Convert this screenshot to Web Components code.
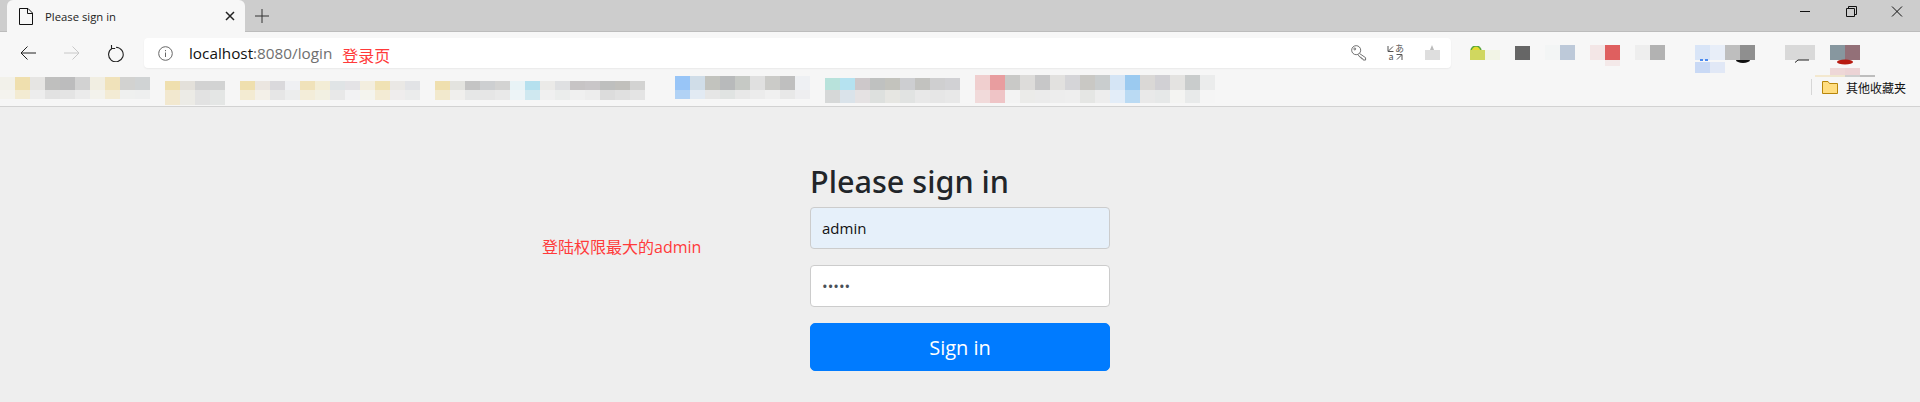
<!DOCTYPE html>
<html lang="zh">
<head>
<meta charset="utf-8">
<title>Please sign in</title>
<style>
  html, body { margin: 0; height: 100%; overflow: hidden; background: #eeeeee; }
  body { display: flex; flex-direction: column; font-family: "Open Sans", "Noto Sans CJK SC", sans-serif; }
</style>
</head>
<body>
<browser-tabs></browser-tabs>
<browser-toolbar></browser-toolbar>
<bookmark-bar></bookmark-bar>
<login-page></login-page>

<script>
// blurred (mosaic) patch: two rows of 15px cells, colours passed as attributes
class PixelStrip extends HTMLElement {
    connectedCallback() {
        const top = (this.getAttribute('top') || '').split(' ').filter(Boolean);
        const bottom = (this.getAttribute('bottom') || '').split(' ').filter(Boolean);
        const h1 = this.getAttribute('h1') || 12;
        const h2 = this.getAttribute('h2') || 10;
        const row = (list, h) => `<div class="row" style="height:${h}px">` +
            list.map(c => `<i style="background:${c}"></i>`).join('') + '</div>';
        this.attachShadow({ mode: 'open' });
        this.shadowRoot.innerHTML = `
            <style>
                :host { display: block; flex: none; }
                .row { display: flex; }
                i { display: block; width: 15px; height: 100%; flex: none; }
            </style>
            ${row(top, h1)}${row(bottom, h2)}
        `;
    }
}
customElements.define('pixel-strip', PixelStrip);

class BrowserTabs extends HTMLElement {
    constructor() {
        super();
        this.attachShadow({ mode: 'open' });
        this.shadowRoot.innerHTML = `
            <style>
                :host {
                    display: flex;
                    align-items: stretch;
                    height: 31px;
                    padding-left: 7px;
                    background: #cdcdcd;
                    border-bottom: 1px solid #bcbcbc;
                    flex: none;
                }
                .tab {
                    display: flex;
                    align-items: center;
                    width: 238px;
                    height: 32px;
                    box-sizing: border-box;
                    padding: 0 10px 0 12px;
                    background: #f7f7f7;
                    border-radius: 6px 6px 0 0;
                    font-size: 11.3px;
                    color: #222;
                }
                .title { flex: 1; margin-left: 12px; }
                svg { display: block; flex: none; }
                .plus { margin: 9px 0 0 10px; }
                .win { margin-left: auto; display: flex; align-items: flex-start; }
                .win svg { width: 46px; height: 22px; }
            </style>
            <div class="tab">
                <svg width="14" height="17" viewBox="0 0 14 17" fill="none" stroke="#111" stroke-width="1">
                    <path d="M.5.5H9L13.5 5V16.5H.5Z M8.5.5V5.5H13.5"/>
                </svg>
                <span class="title">Please sign in</span>
                <svg width="10" height="10" viewBox="0 0 10 10" stroke="#222" stroke-width="1.5"><path d="M1 1L9 9M9 1L1 9"/></svg>
            </div>
            <svg class="plus" width="14" height="14" viewBox="0 0 14 14" stroke="#333" stroke-width="1"><path d="M7 0V14M0 7H14"/></svg>
            <div class="win">
                <svg viewBox="0 0 46 22" stroke="#111" fill="none"><path d="M18 11.5H28"/></svg>
                <svg viewBox="0 0 46 22" stroke="#111" fill="none"><path d="M18.5 8.5H26.5V16.5H18.5Z M20.5 8V6.5H28.5V14.5H27"/></svg>
                <svg viewBox="0 0 46 22" stroke="#111" fill="none"><path d="M18 6.5L28 16.5M28 6.5L18 16.5"/></svg>
            </div>
        `;
    }
}
customElements.define('browser-tabs', BrowserTabs);

class AddressBar extends HTMLElement {
    constructor() {
        super();
        this.attachShadow({ mode: 'open' });
        this.shadowRoot.innerHTML = `
            <style>
                :host {
                    display: flex;
                    align-items: center;
                    width: 1307px;
                    height: 30px;
                    flex: none;
                    background: #fff;
                    border-radius: 4px;
                    box-shadow: 0 1px 2px rgba(0,0,0,.06);
                    font-size: 15.3px;
                }
                .info { margin-left: 14px; }
                .url { margin-left: 16px; color: #111; }
                .url span { color: #6f6f6f; }
                .note { margin: 4px 0 0 10px; color: #ff3a3a; font-size: 16px; }
                .tools { margin-left: auto; display: flex; align-items: center; padding-right: 11px; }
                svg { display: block; flex: none; }
                .key { margin-right: 20px; }
                .translate {
                    display: grid;
                    grid-template-columns: 8px 8px;
                    grid-template-rows: 8px 8px;
                    width: 16px;
                    height: 16px;
                    margin-right: 22px;
                    font: 9px/8px "Noto Sans CJK JP", sans-serif;
                    color: #555;
                    text-align: center;
                }
                .ext { width: 15px; height: 16px; }
                .ext::before {
                    content: "";
                    display: block;
                    width: 0;
                    height: 0;
                    margin-left: 5px;
                    border: 2.5px solid transparent;
                    border-top: 0;
                    border-bottom: 5px solid #bbb;
                }
                .ext b { display: block; height: 10px; margin-top: 0; background: #dedede; }
            </style>
            <svg class="info" width="15" height="15" viewBox="0 0 15 15" fill="none" stroke="#666">
                <circle cx="7.5" cy="7.5" r="6.8"/><path d="M7.5 6.5V11M7.5 4V5.2"/>
            </svg>
            <span class="url">localhost<span>:8080/login</span></span>
            <span class="note"><slot></slot></span>
            <div class="tools">
                <svg class="key" width="16" height="16" viewBox="0 0 17 17" fill="none" stroke="#666">
                    <circle cx="5.5" cy="5.5" r="4.8"/><circle cx="4" cy="4.2" r="1"/>
                    <path d="M9 9L15.5 13.5V16H13L12.5 14.5H11L10.8 13H9.5L7.5 10.3"/>
                </svg>
                <div class="translate">
                    <svg width="8" height="8" viewBox="0 0 8 8" fill="none" stroke="#555"><path d="M1 1V6.5H6.5M1.5 6L6 1.5"/></svg>
                    <span>あ</span>
                    <span>a</span>
                    <svg width="8" height="8" viewBox="0 0 8 8" fill="none" stroke="#555"><path d="M7 7V1.5H1.5M6.5 2L2 6.5"/></svg>
                </div>
                <div class="ext"><b></b></div>
            </div>
        `;
    }
}
customElements.define('address-bar', AddressBar);

class BrowserToolbar extends HTMLElement {
    constructor() {
        super();
        this.attachShadow({ mode: 'open' });
        this.shadowRoot.innerHTML = `
            <style>
                :host {
                    display: flex;
                    height: 38px;
                    padding-left: 20px;
                    background: #f7f7f7;
                    flex: none;
                }
                .nav { display: flex; align-items: center; gap: 28px; width: 124px; height: 42px; flex: none; }
                svg { display: block; flex: none; }
                address-bar { margin-top: 6px; }
                .ext { position: relative; flex: 1; }
                .ext pixel-strip { position: absolute; }
                .mark { position: absolute; }
            </style>
            <div class="nav">
                <svg width="16" height="14" viewBox="0 0 16 14" fill="none" stroke="#222"><path d="M16 7H1M7.5 .5L1 7L7.5 13.5"/></svg>
                <svg width="16" height="14" viewBox="0 0 16 14" fill="none" stroke="#c8c8c8"><path d="M0 7H15M8.5 .5L15 7L8.5 13.5"/></svg>
                <svg width="16" height="17" viewBox="0 0 16 17" fill="none" stroke="#222"><path d="M4.2 3.2A7.3 7.3 0 1 0 8 2.2M3.5 0V3.5H7.2" stroke-width="1.1"/></svg>
            </div>
            <address-bar>登录页</address-bar>
            <div class="ext">
                <svg class="mark" style="left:19px;top:14px" width="12" height="5" viewBox="0 0 12 5"><path d="M1 5A5 5 0 0 1 11 5" fill="#e3d92c" stroke="#5aa83c" stroke-width="1.5"/></svg>
                <pixel-strip style="left:19px;top:18px" top="#d0d75f #f2f4e6" h1="10" h2="0"></pixel-strip>
                <pixel-strip style="left:64px;top:14px" top="#666666" h1="14" h2="0"></pixel-strip>
                <pixel-strip style="left:94px;top:13px" top="#f3f5f5 #bdc9d9" h1="15" h2="0"></pixel-strip>
                <pixel-strip style="left:139px;top:13px" top="#f3e6e6 #df5f5f" h1="15" h2="6" bottom="#f7f7f7 #f4e9e9"></pixel-strip>
                <pixel-strip style="left:184px;top:13px" top="#eeeeee #b2b2b2" h1="15" h2="0"></pixel-strip>
                <pixel-strip style="left:244px;top:13px" top="#d9e5f7 #e8eef8 #bebebe #8f8f8f" h1="15" h2="0"></pixel-strip>
                <pixel-strip style="left:244px;top:30px" top="#c9d9f5 #e1e8f6" h1="11" h2="0"></pixel-strip>
                <svg class="mark" style="left:249px;top:27px" width="16" height="4"><path d="M0 .5H3M5 .5H8" stroke="#4a8af0" stroke-width="3" stroke-dasharray="3 2"/></svg>
                <svg class="mark" style="left:285px;top:28px" width="14" height="3"><path d="M0 0H14A7 3 0 0 1 0 0Z" fill="#111"/></svg>
                <pixel-strip style="left:334px;top:13px" top="#d9d9d9 #d9d9d9" h1="15" h2="0"></pixel-strip>
                <svg class="mark" style="left:344px;top:27px" width="14" height="4"><path d="M0 3.5L3 1H14" stroke="#222" fill="none"/></svg>
                <pixel-strip style="left:379px;top:13px" top="#87979f #937078" h1="15" h2="0"></pixel-strip>
                <svg class="mark" style="left:386px;top:27px" width="16" height="6"><ellipse cx="8" cy="3" rx="8" ry="2.6" fill="#b81a10"/></svg>
                <pixel-strip style="left:379px;top:36px" top="#eed7d7 #ecd3d5" h1="7" h2="0"></pixel-strip>
                <pixel-strip style="left:364px;top:43px" top="#f3e8cf #efe6cf #cfcfcf #bdbdbd" h1="2" h2="0"></pixel-strip>
            </div>
        `;
    }
}
customElements.define('browser-toolbar', BrowserToolbar);

class BookmarkBar extends HTMLElement {
    constructor() {
        super();
        this.attachShadow({ mode: 'open' });
        this.shadowRoot.innerHTML = `
            <style>
                :host {
                    display: flex;
                    align-items: flex-start;
                    gap: 15px;
                    height: 36px;
                    background: #f6f6f6;
                    border-bottom: 1px solid #d2d2d2;
                    flex: none;
                }
                .other {
                    margin-left: auto;
                    display: flex;
                    align-items: center;
                    height: 16px;
                    margin-top: 9px;
                    padding-left: 10px;
                    padding-right: 14px;
                    border-left: 1px solid #d6d6d6;
                    font-size: 12px;
                    color: #111;
                    font-family: "Noto Sans CJK SC", sans-serif;
                }
                svg { display: block; margin-right: 8px; }
            </style>
            <pixel-strip style="margin-top:7px" h1="13" h2="9"
                top="#f2f1ea #efdfae #e6e5e3 #bfbfbe #bcbcbd #d2d2d2 #f1eee2 #f0e2ba #d2d2d0 #d0d3d4"
                bottom="#f4f3ee #f3ebd2 #ededed #e2e2e2 #e4e4e4 #ebebeb #f3f2ec #f3ebd4 #eff0ef #eeefef"></pixel-strip>
            <pixel-strip style="margin-top:11px" h1="9" h2="15"
                top="#efdfae #e3e0da #d2d2d2 #d2d3d3"
                bottom="#f2e8cf #ecebe6 #e2e2e2 #e4e6e5"></pixel-strip>
            <pixel-strip style="margin-top:11px" h1="9" h2="10"
                top="#efdfae #ebe6e0 #dad9dc #eff0f3 #f0e2ba #f3edd6 #e0e4e6 #e4e3e6 #f3eedf #f0e2b4 #eae8e5 #e2e3e6"
                bottom="#f3ebd2 #f3f0e8 #e6e6e6 #eceded #f3edd9 #f2f0e2 #e8e8e8 #f2f2f3 #f4f4ee #f3ebd4 #efeded #ebecec"></pixel-strip>
            <pixel-strip style="margin-top:11px" h1="9" h2="10"
                top="#efdfae #e3e3df #c4c4c4 #cdcfd1 #d3d3d2 #e8f3f6 #b5e0ee #ebeae8 #dfe0e2 #c7c4c5 #c9c6c8 #bebfbe #c1c0bc #d3d3d2"
                bottom="#f2e9cd #f0efed #e6e7e7 #e6e6e6 #e9e9e9 #edf4f7 #cfe8f0 #f0f0f0 #ebedec #f0f0f0 #ededed #dcdcdc #e0e0e0 #e4e4e4"></pixel-strip>
            <pixel-strip style="margin:6px 0 0 15px" h1="14" h2="9"
                top="#98c5f7 #d0dde8 #c2c3be #b8babb #c6c9c5 #e0e0e0 #cbcbc8 #bfbfbf #eef0f3"
                bottom="#b1d2f5 #e2eaf3 #e6e6e6 #e0e3e2 #e8e8e8 #ececec #f0f0f0 #e8e8e8 #eeeef0"></pixel-strip>
            <pixel-strip style="margin-top:8px" h1="12" h2="13"
                top="#b8e2db #b5e2f0 #cdc8ca #bfc1c0 #c3c3bd #cdced1 #c2c2bf #cfcfd0 #d1d1d4"
                bottom="#d6d8d8 #dae3ea #e5e2e3 #dde0de #e6e6e2 #e1e3e2 #e8e8e8 #e6e6e6 #e8e8e8"></pixel-strip>
            <pixel-strip style="margin-top:5px" h1="15" h2="13"
                top="#f0cfcf #e89d9f #c9c9c7 #dddcda #c7c7c8 #e2e1df #d5d5d8 #c9c8c4 #c9cdce #d5e5f5 #9bcaf0 #dad8d6 #d1d0d4 #e4e3e1 #c9cccc #ebecec"
                bottom="#f1dada #efc4c6 #f3f3f3 #ebebe9 #ebebeb #ededed #eeeeee #e5e6e4 #ededed #e3edf8 #badaf3 #e9e9e9 #e6e8e8 #f4f4f2 #e8eaea #f5f5f5"></pixel-strip>
            <div class="other">
                <svg width="16" height="13" viewBox="0 0 16 13"><path d="M.5 12.5V.5H6L7.5 2.5H15.5V12.5Z" fill="#ffdd80" stroke="#b8860b"/></svg>
                其他收藏夹
            </div>
        `;
    }
}
customElements.define('bookmark-bar', BookmarkBar);

class SignField extends HTMLElement {
    constructor() {
        super();
        this.attachShadow({ mode: 'open' });
        this.shadowRoot.innerHTML = `
            <style>
                :host {
                    display: flex;
                    align-items: center;
                    height: 42px;
                    box-sizing: border-box;
                    padding: 0 11px;
                    border: 1px solid #ccc;
                    border-radius: 4px;
                    background: var(--field-bg, #fff);
                    color: var(--field-color, #111);
                    font-size: 15px;
                }
            </style>
            <slot></slot>
        `;
    }
}
customElements.define('sign-field', SignField);

class LoginPage extends HTMLElement {
    constructor() {
        super();
        this.attachShadow({ mode: 'open' });
        this.shadowRoot.innerHTML = `
            <style>
                :host {
                    display: block;
                    flex: 1;
                    position: relative;
                    background: #eeeeee;
                    padding-top: 57px;
                }
                form { display: flex; flex-direction: column; width: 300px; margin: 0 auto; }
                h2 { margin: 0 0 9px; font: 500 30.6px/34px "Noto Sans", sans-serif; color: #212529; white-space: nowrap; }
                sign-field { margin-bottom: 16px; }
                button {
                    height: 48px;
                    padding: 0;
                    border: 1px solid #007bff;
                    border-radius: 5px;
                    background: #007bff;
                    color: #fff;
                    font: 20px "Open Sans", sans-serif;
                }
                .note { position: absolute; left: 542px; top: 129px; color: #ff3a3a; font-size: 16px; line-height: 22px; }
            </style>
            <span class="note">登陆权限最大的admin</span>
            <form>
                <h2>Please sign in</h2>
                <sign-field style="--field-bg:#e6f0fa">admin</sign-field>
                <sign-field style="--field-color:#495057">•••••</sign-field>
                <button type="button">Sign in</button>
            </form>
        `;
    }
}
customElements.define('login-page', LoginPage);
</script>
</body>
</html>
